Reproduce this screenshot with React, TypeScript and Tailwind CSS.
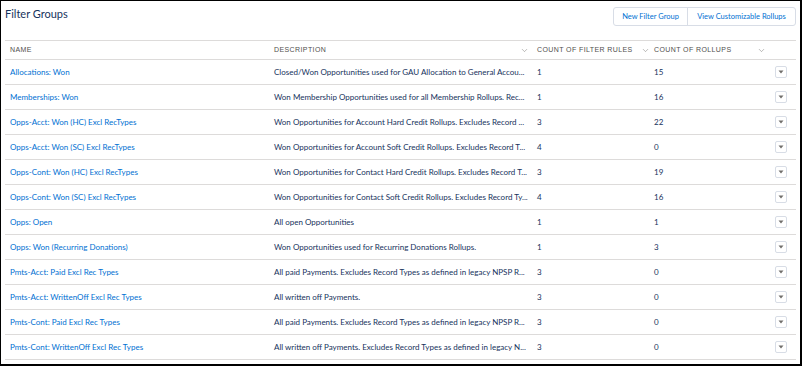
import React from 'react';
import { ChevronDown } from 'lucide-react';

type Group = {
  name: string;
  description: string;
  rules: number;
  rollups: number;
};

const groups: Group[] = [
  { name: 'Allocations: Won', description: 'Closed/Won Opportunities used for GAU Allocation to General Accou...', rules: 1, rollups: 15 },
  { name: 'Memberships: Won', description: 'Won Membership Opportunities used for all Membership Rollups. Rec...', rules: 1, rollups: 16 },
  { name: 'Opps-Acct: Won (HC) Excl RecTypes', description: 'Won Opportunities for Account Hard Credit Rollups. Excludes Record ...', rules: 3, rollups: 22 },
  { name: 'Opps-Acct: Won (SC) Excl RecTypes', description: 'Won Opportunities for Account Soft Credit Rollups. Excludes Record T...', rules: 4, rollups: 0 },
  { name: 'Opps-Cont: Won (HC) Excl RecTypes', description: 'Won Opportunities for Contact Hard Credit Rollups. Excludes Record T...', rules: 3, rollups: 19 },
  { name: 'Opps-Cont: Won (SC) Excl RecTypes', description: 'Won Opportunities for Contact Soft Credit Rollups. Excludes Record Ty...', rules: 4, rollups: 16 },
  { name: 'Opps: Open', description: 'All open Opportunities', rules: 1, rollups: 1 },
  { name: 'Opps: Won (Recurring Donations)', description: 'Won Opportunities used for Recurring Donations Rollups.', rules: 1, rollups: 3 },
  { name: 'Pmts-Acct: Paid Excl Rec Types', description: 'All paid Payments. Excludes Record Types as defined in legacy NPSP R...', rules: 3, rollups: 0 },
  { name: 'Pmts-Acct: WrittenOff Excl Rec Types', description: 'All written off Payments.', rules: 3, rollups: 0 },
  { name: 'Pmts-Cont: Paid Excl Rec Types', description: 'All paid Payments. Excludes Record Types as defined in legacy NPSP R...', rules: 3, rollups: 0 },
  { name: 'Pmts-Cont: WrittenOff Excl Rec Types', description: 'All written off Payments. Excludes Record Types as defined in legacy N...', rules: 3, rollups: 0 },
];

const cols = 'grid grid-cols-[264px_264px_117px_116px_30px]';

function RowMenu() {
  return (
    <button className="w-[12px] h-[12px] border border-[#d8dde6] rounded-[2px] bg-white flex items-center justify-center">
      <svg width="6" height="4" viewBox="0 0 6 4">
        <path d="M0.5 0.5 L5.5 0.5 L3 3.5 Z" fill="#706e6b" />
      </svg>
    </button>
  );
}

export default function App() {
  return (
    <div className="w-[802px] h-[366px] bg-white border-t border-l border-r-2 border-b-2 border-black font-['Lato','Liberation_Sans',sans-serif] overflow-hidden">
      <div className="h-[39px] flex items-start justify-between pl-[4px] pr-[4px]">
        <h1 className="mt-[5px] text-[11px] text-[#16325c]">Filter Groups</h1>
        <div className="mt-[6px] flex h-[19px] border border-[#d8dde6] rounded-[3px] text-[7.5px] text-[#0070d2]">
          <button className="w-[74px] h-full flex items-center justify-center border-r border-[#d8dde6]">
            New Filter Group
          </button>
          <button className="w-[107px] h-full flex items-center justify-center">
            View Customizable Rollups
          </button>
        </div>
      </div>

      <div className="mx-[4px]">
        <div className={`${cols} h-[20px] border-t border-b border-[#dddbda] font-['Liberation_Sans',sans-serif] text-[7px] tracking-[0.4px] text-[#514f4d]`}>
          <div className="pl-[5px] flex items-center">NAME</div>
          <div className="pl-[5px] pr-[4px] flex items-center justify-between">
            <span>DESCRIPTION</span>
            <ChevronDown size={9} strokeWidth={1.25} className="text-[#706e6b]" />
          </div>
          <div className="pl-[4px] flex items-center justify-between">
            <span>COUNT OF FILTER RULES</span>
            <ChevronDown size={9} strokeWidth={1.25} className="text-[#706e6b]" />
          </div>
          <div className="pl-[4px] flex items-center justify-between">
            <span>COUNT OF ROLLUPS</span>
            <ChevronDown size={9} strokeWidth={1.25} className="text-[#706e6b]" />
          </div>
          <div />
        </div>

        {groups.map((g) => (
          <div key={g.name} className={`${cols} h-[25px] border-b border-[#dddbda] text-[8px] text-[#16325c]`}>
            <div className="pl-[5px] flex items-center text-[#0070d2]">{g.name}</div>
            <div className="pl-[5px] flex items-center whitespace-nowrap overflow-hidden">{g.description}</div>
            <div className="pl-[4px] flex items-center">{g.rules}</div>
            <div className="pl-[4px] flex items-center">{g.rollups}</div>
            <div className="pl-[9px] flex items-center">
              <RowMenu />
            </div>
          </div>
        ))}
      </div>
    </div>
  );
}
